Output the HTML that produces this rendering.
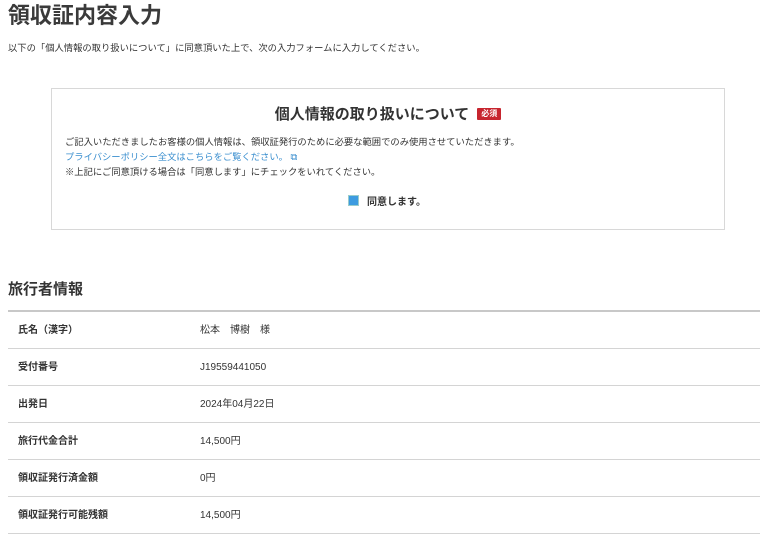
<!DOCTYPE html>
<html><head><meta charset="utf-8"><style>
body{margin:0;width:768px;height:540px;overflow:hidden;background:#fff;font-family:"Liberation Sans","Noto Sans CJK JP",sans-serif;color:#333;}
.t{position:absolute;left:8px;top:2px;font-size:22px;font-weight:bold;color:#3a3a3a;line-height:28px;margin:0}
.s{position:absolute;left:8px;top:41px;font-size:9.3px;line-height:14px}
.box{position:absolute;left:51px;top:88px;width:672px;height:140px;border:1px solid #d8d8d8}
.bt{position:absolute;left:0;right:0;top:16px;text-align:center;font-size:15px;font-weight:bold;line-height:20px;color:#333}
.req{display:inline-block;background:#c7252f;color:#fff;font-size:8px;padding:0 4px;line-height:12px;vertical-align:3px;margin-left:8px;border-radius:1px}
.bd{position:absolute;left:13px;top:46px;font-size:9.3px;line-height:15px}
.bd a{color:#3b8fcf;text-decoration:none}
.cb{position:absolute;left:296px;top:106px;font-size:10px;font-weight:bold;line-height:14px}
.cb i{display:inline-block;width:9px;height:9px;background:#3d9be0;border:1px solid #9cc;vertical-align:-1px;margin-right:8px}
.h2{position:absolute;left:8px;top:280px;font-size:15px;font-weight:bold;line-height:20px;color:#333}
table{position:absolute;left:8px;top:310px;width:752px;border-collapse:collapse;border-top:2px solid #c8c8c8;font-size:10px}
td{height:34px;border-bottom:1px solid #d4d4d4;padding:2px 0 0;line-height:14px}
td.l{width:182px;padding-left:10px;font-weight:bold}
</style></head><body>
<h1 class="t">領収証内容入力</h1>
<div class="s">以下の「個人情報の取り扱いについて」に同意頂いた上で、次の入力フォームに入力してください。</div>
<div class="box">
<div class="bt">個人情報の取り扱いについて<span class="req">必須</span></div>
<div class="bd">ご記入いただきましたお客様の個人情報は、領収証発行のために必要な範囲でのみ使用させていただきます。<br><a>プライバシーポリシー全文はこちらをご覧ください。 ⧉</a><br>※上記にご同意頂ける場合は「同意します」にチェックをいれてください。</div>
<div class="cb"><i></i>同意します。</div>
</div>
<div class="h2">旅行者情報</div>
<table>
<tr><td class="l">氏名（漢字）</td><td>松本　博樹　様</td></tr>
<tr><td class="l">受付番号</td><td>J19559441050</td></tr>
<tr><td class="l">出発日</td><td>2024年04月22日</td></tr>
<tr><td class="l">旅行代金合計</td><td>14,500円</td></tr>
<tr><td class="l">領収証発行済金額</td><td>0円</td></tr>
<tr><td class="l">領収証発行可能残額</td><td>14,500円</td></tr>
</table>
</body></html>
